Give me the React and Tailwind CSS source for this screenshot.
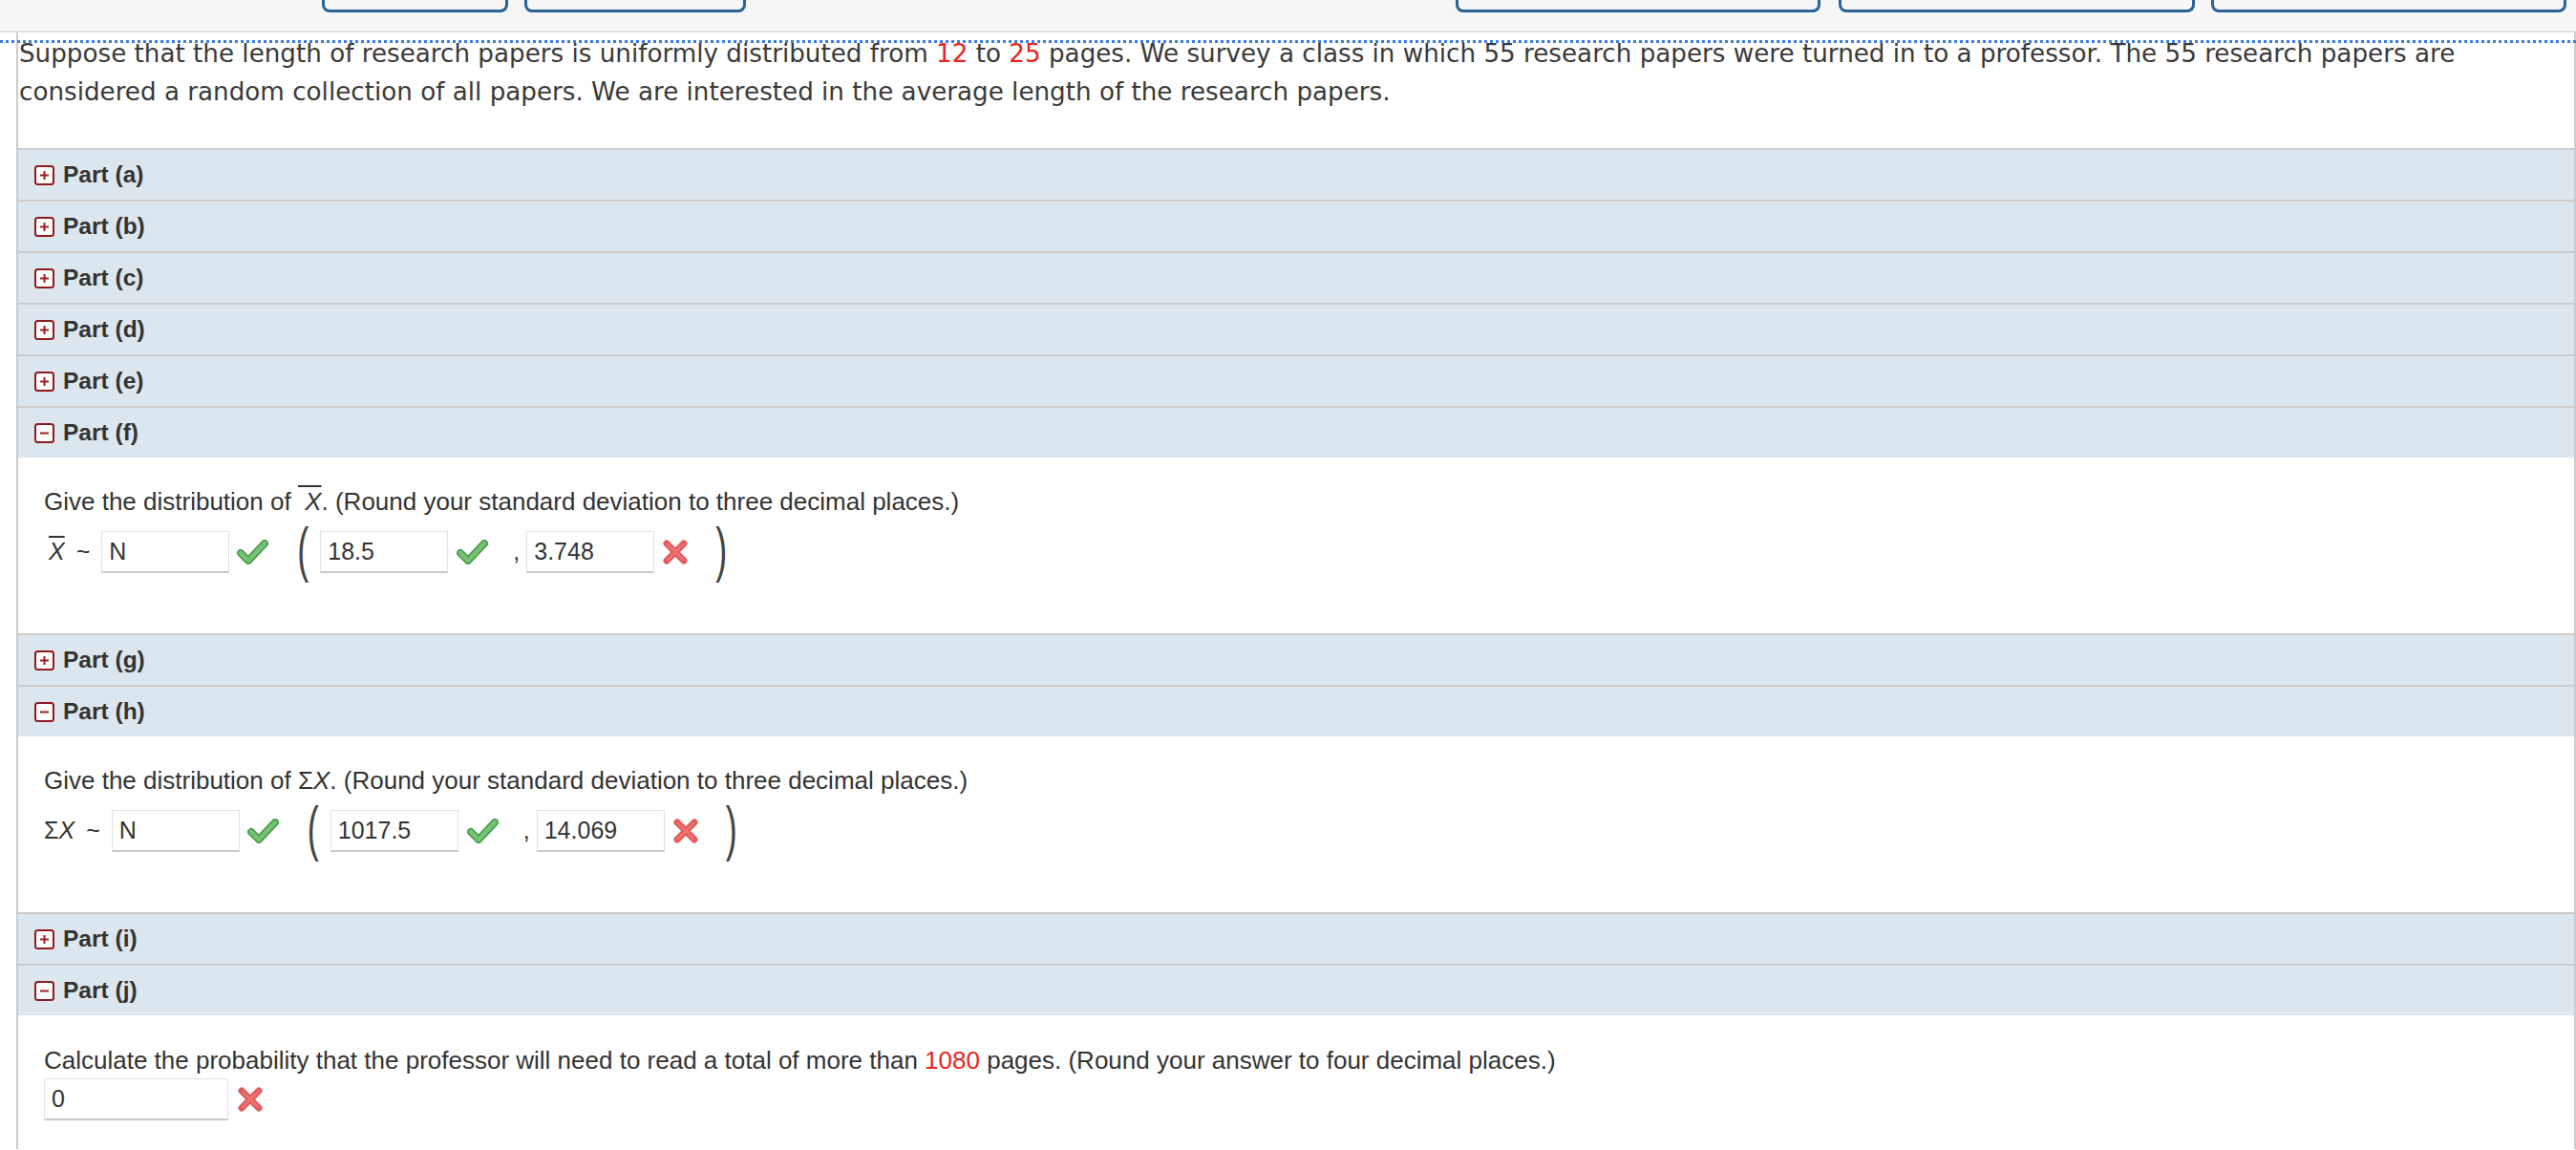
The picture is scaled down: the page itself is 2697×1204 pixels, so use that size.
import React from 'react'

const arial = { fontFamily: '"Liberation Sans", Arial, sans-serif' }

function ToggleIcon({ open }) {
    return (
        <svg width="21" height="21" viewBox="0 0 21 21" className="shrink-0">
            <rect x="1" y="1" width="19" height="19" rx="2.5" fill="#ffffff" stroke="#8e1b1b" strokeWidth="2" />
            <line x1="6" y1="10.5" x2="15" y2="10.5" stroke="#a11c1c" strokeWidth="2" />
            {!open && <line x1="10.5" y1="6" x2="10.5" y2="15" stroke="#a11c1c" strokeWidth="2" />}
        </svg>
    )
}

function Check() {
    return (
        <svg width="33" height="26" viewBox="0 0 33 26" className="shrink-0">
            <polyline points="4,14 12,22 29,4" fill="none" stroke="#4f9d4f" strokeWidth="8" strokeLinecap="round" strokeLinejoin="round" />
            <polyline points="4,14 12,22 29,4" fill="none" stroke="#74c374" strokeWidth="4.5" strokeLinecap="round" strokeLinejoin="round" />
        </svg>
    )
}

function Cross() {
    return (
        <svg width="28" height="28" viewBox="0 0 28 28" className="shrink-0">
            <line x1="5" y1="5" x2="23" y2="23" stroke="#e35a5a" strokeWidth="7" strokeLinecap="round" />
            <line x1="23" y1="5" x2="5" y2="23" stroke="#e35a5a" strokeWidth="7" strokeLinecap="round" />
            <line x1="6" y1="6" x2="22" y2="22" stroke="#ec7272" strokeWidth="3" strokeLinecap="round" />
            <line x1="22" y1="6" x2="6" y2="22" stroke="#ec7272" strokeWidth="3" strokeLinecap="round" />
        </svg>
    )
}

function Field({ value, className = 'w-[134px]' }) {
    return (
        <div className={`${className} h-[44px] shrink-0 bg-white border border-[#e2e2e2] border-b-2 border-b-[#c9c9c9] flex items-center px-[7px] text-[25px] text-[#333333]`}>
            {value}
        </div>
    )
}

function Paren({ children }) {
    return (
        <span className="text-[36px] leading-none text-[#444444] scale-y-[1.75] inline-block">{children}</span>
    )
}

function PartHeader({ label, open }) {
    return (
        <div className="h-[54px] border-t-2 border-[#cccccc] bg-[#dce6ef] flex items-center gap-[9px] pl-[17px]">
            <ToggleIcon open={open} />
            <span className="font-bold text-[24.5px] text-[#333333]">Part ({label})</span>
        </div>
    )
}

function Distribution({ symbol, sentenceSymbol, values }) {
    return (
        <div className="pt-[32px] pb-[56px] pl-[27px] text-[#333333]">
            <p className="text-[26px] leading-[28px]">
                Give the distribution of {sentenceSymbol}. (Round your standard deviation to three decimal places.)
            </p>
            <div className="mt-[10px] h-[58px] flex items-center text-[25px]">
                {symbol}
                <span className="ml-[12px] mr-[12px]">~</span>
                <Field value="N" className="w-[134px]" />
                <span className="ml-[8px]"><Check /></span>
                <span className="ml-[30px]"><Paren>(</Paren></span>
                <span className="ml-[12px]"><Field value={values[0]} /></span>
                <span className="ml-[9px]"><Check /></span>
                <span className="ml-[26px]">,</span>
                <span className="ml-[7px]"><Field value={values[1]} /></span>
                <span className="ml-[8px]"><Cross /></span>
                <span className="ml-[28px]"><Paren>)</Paren></span>
            </div>
        </div>
    )
}

export default function App() {
    const buttons = [
        'ml-[337px] w-[195px]',
        'ml-[17px] w-[232px]',
        'ml-[743px] w-[382px]',
        'ml-[19px] w-[373px]',
        'ml-[17px] w-[372px]',
    ]

    return (
        <div className="relative min-h-screen bg-white" style={arial}>
            <div className="h-[34px] bg-[#f6f6f6] border-b-2 border-[#dddddd] flex items-start">
                {buttons.map((b, i) => (
                    <div key={i} className={`${b} h-[13px] border-[3px] border-t-0 border-[#2a6497] rounded-b-[8px]`} />
                ))}
            </div>

            <div className="absolute top-[42px] left-0 right-0 border-t-[3px] border-dotted border-[#3b7ddb]" />

            <div className="ml-[17px] border-l-2 border-r-2 border-[#cccccc]">
                <p
                    className="pt-[2px] pl-[1px] pr-[20px] mb-[39px] text-[26.2px] leading-[40px] text-[#3a3a3a]"
                    style={{ fontFamily: '"DejaVu Sans", Verdana, sans-serif' }}
                >
                    Suppose that the length of research papers is uniformly distributed from{' '}
                    <span className="text-[#e8261e]">12</span> to <span className="text-[#e8261e]">25</span> pages. We survey a class in
                    which 55 research papers were turned in to a professor. The 55 research papers are considered a random collection of
                    all papers. We are interested in the average length of the research papers.
                </p>

                {['a', 'b', 'c', 'd', 'e'].map(l => (
                    <PartHeader key={l} label={l} />
                ))}
                <PartHeader label="f" open />
                <Distribution
                    sentenceSymbol={<span className="italic overline">&nbsp;X</span>}
                    symbol={<span className="ml-[5px] italic overline">X</span>}
                    values={['18.5', '3.748']}
                />

                <PartHeader label="g" />
                <PartHeader label="h" open />
                <Distribution
                    sentenceSymbol={<span>Σ<span className="italic">X</span></span>}
                    symbol={<span>Σ<span className="italic">X</span></span>}
                    values={['1017.5', '14.069']}
                />

                <PartHeader label="i" />
                <PartHeader label="j" open />
                <div className="pt-[33px] pb-[30px] pl-[27px] text-[#333333]">
                    <p className="text-[26px] leading-[28px]">
                        Calculate the probability that the professor will need to read a total of more than{' '}
                        <span className="text-[#e8261e]">1080</span> pages. (Round your answer to four decimal places.)
                    </p>
                    <div className="mt-[5px] flex items-center">
                        <Field value="0" className="w-[193px]" />
                        <span className="ml-[9px]"><Cross /></span>
                    </div>
                </div>
            </div>
        </div>
    )
}
